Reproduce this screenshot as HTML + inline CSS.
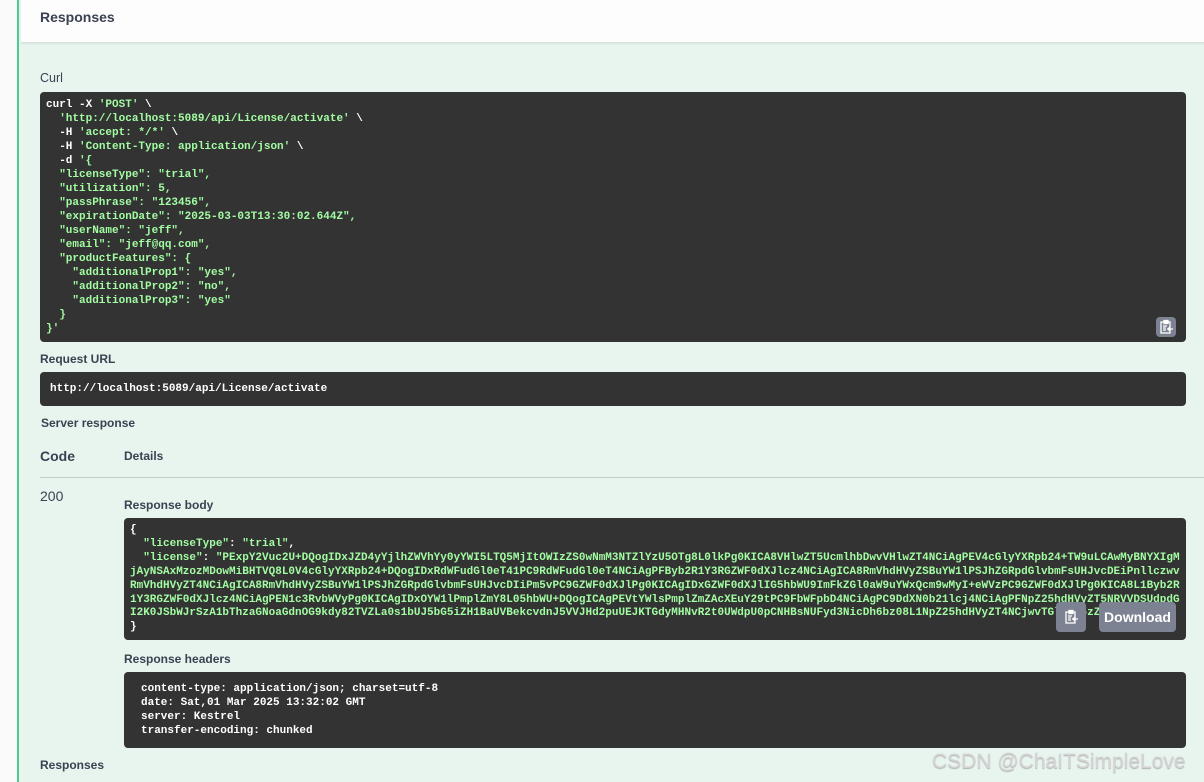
<!DOCTYPE html>
<html><head><meta charset="utf-8"><style>
*{margin:0;padding:0;box-sizing:border-box}
body{width:1204px;height:782px;overflow:hidden;background:#e8f5ef;font-family:"Liberation Sans",Arial,sans-serif;color:#3b4151;position:relative}
.strip{position:absolute;left:0;top:0;width:19px;height:782px;background:#fafafa;border-right:2px solid #49cc90}
.head{position:absolute;left:21px;top:0;right:0;height:43px;background:#fcfdfc;border-bottom:1px solid #d5e3dc;box-shadow:0 1px 2px rgba(0,0,0,.08)}
.head span{position:absolute;left:19px;top:9px;font-size:14px;font-weight:bold}
.lbl{position:absolute;font-size:12px;font-weight:bold;color:#3b4151}
pre{position:absolute;background:#333;border-radius:4px;color:#fff;font-family:"Liberation Mono","DejaVu Sans Mono",monospace;font-weight:bold;font-size:11px;line-height:14px;white-space:pre;overflow:hidden}
.g{color:#a2fca2}
.btn{position:absolute;background:#7d8293;border-radius:4px}
.wm{position:absolute;left:932px;top:750px;font-size:21px;color:#d4d4d4;text-shadow:0 1px 1px #b0b0b0;white-space:nowrap}
</style></head><body>
<div class="strip"></div>
<div class="head"><span>Responses</span></div>
<div class="lbl" style="left:40px;top:71px;font-weight:normal;font-size:12.5px">Curl</div>
<pre style="left:40px;top:92px;width:1146px;height:250px;padding:6px 6px">curl -X <span class="g">'POST'</span> \
  <span class="g">'http://localhost:5089/api/License/activate'</span> \
  -H <span class="g">'accept: */*'</span> \
  -H <span class="g">'Content-Type: application/json'</span> \
  -d <span class="g">'{
  "licenseType": "trial",
  "utilization": 5,
  "passPhrase": "123456",
  "expirationDate": "2025-03-03T13:30:02.644Z",
  "userName": "jeff",
  "email": "jeff@qq.com",
  "productFeatures": {
    "additionalProp1": "yes",
    "additionalProp2": "no",
    "additionalProp3": "yes"
  }
}'</span></pre>
<div class="btn" style="left:1156px;top:317px;width:20px;height:20px"><svg width="20" height="20" viewBox="0 0 20 20" fill="none" stroke="#fff" stroke-width="1.3"><rect x="5" y="5" width="9" height="11"/><rect x="8" y="3.5" width="4" height="3" fill="#fff"/><path d="M7 9h4M7 11h3M7 13h3M11 12h6M14 10l-2 2 2 2"/></svg></div>
<div class="lbl" style="left:40px;top:352px">Request URL</div>
<pre style="left:40px;top:372px;width:1146px;height:34px;padding:10px 10px;line-height:14px">http://localhost:5089/api/License/activate</pre>
<div class="lbl" style="left:41px;top:416px">Server response</div>
<div class="lbl" style="left:40px;top:448px;font-size:14px">Code</div>
<div class="lbl" style="left:124px;top:449px">Details</div>
<div style="position:absolute;left:40px;right:0;top:477px;height:1px;background:#c2cdc8"></div>
<div style="position:absolute;left:40px;top:488px;font-size:14px">200</div>
<div class="lbl" style="left:124px;top:498px">Response body</div>
<pre style="left:124px;top:518px;width:1062px;height:122px;padding:6px 6px;line-height:13.9px">{
  <span class="g">"licenseType"</span>: <span class="g">"trial"</span>,
  <span class="g">"license"</span>: <span class="g">"PExpY2Vuc2U+DQogIDxJZD4yYjlhZWVhYy0yYWI5LTQ5MjItOWIzZS0wNmM3NTZlYzU5OTg8L0lkPg0KICA8VHlwZT5UcmlhbDwvVHlwZT4NCiAgPEV4cGlyYXRpb24+TW9uLCAwMyBNYXIgM
jAyNSAxMzozMDowMiBHTVQ8L0V4cGlyYXRpb24+DQogIDxRdWFudGl0eT41PC9RdWFudGl0eT4NCiAgPFByb2R1Y3RGZWF0dXJlcz4NCiAgICA8RmVhdHVyZSBuYW1lPSJhZGRpdGlvbmFsUHJvcDEiPnllczwv
RmVhdHVyZT4NCiAgICA8RmVhdHVyZSBuYW1lPSJhZGRpdGlvbmFsUHJvcDIiPm5vPC9GZWF0dXJlPg0KICAgIDxGZWF0dXJlIG5hbWU9ImFkZGl0aW9uYWxQcm9wMyI+eWVzPC9GZWF0dXJlPg0KICA8L1Byb2R
1Y3RGZWF0dXJlcz4NCiAgPEN1c3RvbWVyPg0KICAgIDxOYW1lPmplZmY8L05hbWU+DQogICAgPEVtYWlsPmplZmZAcXEuY29tPC9FbWFpbD4NCiAgPC9DdXN0b21lcj4NCiAgPFNpZ25hdHVyZT5NRVVDSUdpdG
I2K0JSbWJrSzA1bThzaGNoaGdnOG9kdy82TVZLa0s1bUJ5bG5iZH1BaUVBekcvdnJ5VVJHd2puUEJKTGdyMHNvR2t0UWdpU0pCNHBsNUFyd3NicDh6bz08L1NpZ25hdHVyZT4NCjwvTGljZW5zZT4="</span>
}</pre>
<div class="btn" style="left:1056px;top:602px;width:30px;height:30px"><svg width="30" height="30" viewBox="-5 -5 30 30" fill="none" stroke="#fff" stroke-width="1.3"><rect x="5" y="5" width="9" height="11"/><rect x="8" y="3.5" width="4" height="3" fill="#fff"/><path d="M7 9h4M7 11h3M7 13h3M11 12h6M14 10l-2 2 2 2"/></svg></div>
<div class="btn" style="left:1099px;top:602px;width:77px;height:30px;color:#fff;font-weight:bold;font-size:14px;text-align:center;line-height:30px">Download</div>
<div class="lbl" style="left:124px;top:652px">Response headers</div>
<pre style="left:124px;top:672px;width:1062px;height:76px;padding:10px 17px">content-type: application/json; charset=utf-8
date: Sat,01 Mar 2025 13:32:02 GMT
server: Kestrel
transfer-encoding: chunked</pre>
<div class="lbl" style="left:40px;top:758px">Responses</div>
<div class="wm">CSDN @ChaITSimpleLove</div>
</body></html>
